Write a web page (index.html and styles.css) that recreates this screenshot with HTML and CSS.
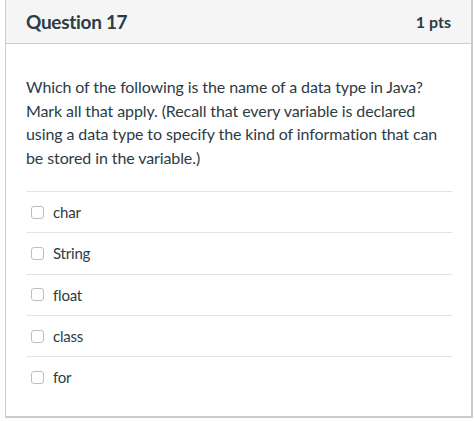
FILE: index.html
```html
<!DOCTYPE html>
<html lang="en">

<head>
    <meta charset="UTF-8">
    <meta name="viewport" content="width=device-width, initial-scale=1.0">
    <title>Question 17</title>
    <link rel="stylesheet" href="styles.css">
</head>

<body>
    <div class="question">
        <div class="header">
            <h2 class="title">Question 17</h2>
            <span class="points">1 pts</span>
        </div>
        <div class="content">
            <p class="text">Which of the following is the name of a data type in Java? Mark all that apply. (Recall that every variable is declared using a data type to specify the kind of information that can be stored in the variable.)</p>
            <div class="answers">
                <label class="answer"><span class="box"></span>char</label>
                <label class="answer"><span class="box"></span>String</label>
                <label class="answer"><span class="box"></span>float</label>
                <label class="answer"><span class="box"></span>class</label>
                <label class="answer"><span class="box"></span>for</label>
            </div>
        </div>
    </div>
</body>

</html>
```

FILE: styles.css
```css
body {
    margin: 0;
    font-family: Lato, "Open Sans", sans-serif;
    color: #2d3b45;
    background: #fff;
}

.question {
    margin-left: 5px;
    width: 465px;
    height: 416px;
    border: 1px solid #c7cdd1;
    border-width: 0 2px 2px 1px;
}

.header {
    height: 43px;
    display: flex;
    justify-content: space-between;
    align-items: center;
    padding: 0 20px 0 20px;
    background: #f5f5f5;
    border-bottom: 1px solid #c7cdd1;
}

.title {
    margin: 0;
    font-size: 19px;
    font-weight: bold;
    letter-spacing: -0.3px;
}

.points {
    font-size: 16px;
    font-weight: bold;
}

.content {
    padding: 31px 19px 0 20px;
}

.text {
    max-width: 420px;
    margin: 0 0 22px;
    font-size: 16px;
    line-height: 23.5px;
    letter-spacing: -0.1px;
}

.answer {
    display: flex;
    align-items: center;
    height: 40.3px;
    border-top: 1px solid #e0e4e6;
    font-size: 15px;
    letter-spacing: -0.2px;
}

.box {
    width: 11px;
    height: 11px;
    margin: 0 9px 0 5px;
    border: 1px solid #b8bfc4;
    border-radius: 3px;
    background: #fff;
}
```
